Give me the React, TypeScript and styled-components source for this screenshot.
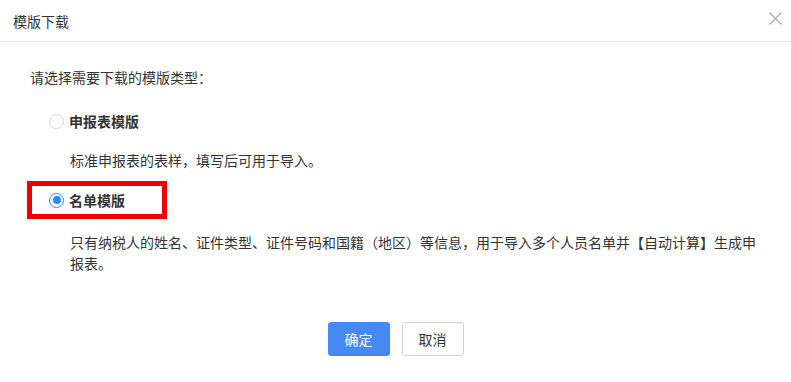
import styled, { createGlobalStyle } from "styled-components";

const GlobalStyle = createGlobalStyle`
  html, body {
    margin: 0;
    padding: 0;
    background: #fff;
  }
  body {
    font-family: "Noto Sans CJK SC", "Liberation Sans", sans-serif;
    color: #333;
    font-size: 14px;
  }
`;

const Dialog = styled.div`
  width: 791px;
  height: 382px;
  background: #fff;
  display: flex;
  flex-direction: column;
`;

const Header = styled.div`
  height: 41px;
  border-bottom: 1px solid #e5e5e5;
  display: flex;
  align-items: center;
  justify-content: space-between;
  padding: 0 9px 0 13px;
  box-sizing: content-box;
`;

const Title = styled.div`
  font-size: 14px;
  line-height: 20px;
  color: #333;
`;

const CloseButton = styled.button`
  border: none;
  background: none;
  padding: 0;
  width: 13px;
  height: 13px;
  display: flex;
  cursor: pointer;
  margin-top: -4px;
`;

const Body = styled.div`
  padding: 25px 30px 0 30px;
  display: flex;
  flex-direction: column;
  align-items: flex-start;
`;

const Intro = styled.div`
  line-height: 21px;
  margin-bottom: 14px;
`;

const OptionRow = styled.label<{ $highlight?: boolean }>`
  display: flex;
  align-items: center;
  gap: 5px;
  box-sizing: border-box;
  width: 140px;
  height: 38px;
  margin-left: -3px;
  padding-left: 17px;
  border: 5px solid ${(p) => (p.$highlight ? "#f00000" : "transparent")};
  cursor: pointer;
`;

const Radio = styled.span<{ $checked?: boolean }>`
  width: 15px;
  height: 15px;
  box-sizing: border-box;
  border-radius: 50%;
  border: 1px solid ${(p) => (p.$checked ? "#2a8af6" : "#d6d6d6")};
  display: flex;
  align-items: center;
  justify-content: center;
  flex-shrink: 0;

  &::after {
    content: "";
    width: 8px;
    height: 8px;
    border-radius: 50%;
    background: #2a8af6;
    display: ${(p) => (p.$checked ? "block" : "none")};
  }
`;

const OptionLabel = styled.span`
  font-weight: bold;
  line-height: 20px;
  color: #333;
`;

const Desc = styled.div<{ $gap: number }>`
  margin: ${(p) => p.$gap}px 0 0 40px;
  width: 692px;
  line-height: 21px;
  color: #333;
`;

const Footer = styled.div`
  margin-top: auto;
  padding-bottom: 26px;
  display: flex;
  justify-content: center;
  gap: 12px;
`;

const Button = styled.button<{ $primary?: boolean }>`
  height: 34px;
  width: 62px;
  border-radius: 3px;
  font-family: inherit;
  font-size: 14px;
  cursor: pointer;
  border: 1px solid ${(p) => (p.$primary ? "#4689f5" : "#d2d2d2")};
  background: ${(p) => (p.$primary ? "#4689f5" : "#fff")};
  color: ${(p) => (p.$primary ? "#fff" : "#333")};
`;

const options = [
  {
    key: "report",
    label: "申报表模版",
    desc: "标准申报表的表样，填写后可用于导入。",
    checked: false,
    gap: 10,
  },
  {
    key: "list",
    label: "名单模版",
    desc: "只有纳税人的姓名、证件类型、证件号码和国籍（地区）等信息，用于导入多个人员名单并【自动计算】生成申报表。",
    checked: true,
    gap: 13,
  },
];

export default function App() {
  return (
    <>
      <GlobalStyle />
      <Dialog>
        <Header>
          <Title>模版下载</Title>
          <CloseButton aria-label="关闭">
            <svg width="13" height="13" viewBox="0 0 13 13">
              <path d="M0.5 0.5 L12.5 12.5 M12.5 0.5 L0.5 12.5" stroke="#a8a8a8" strokeWidth="1.2" fill="none" />
            </svg>
          </CloseButton>
        </Header>
        <Body>
          <Intro>请选择需要下载的模版类型：</Intro>
          {options.map((o, i) => (
            <div key={o.key} style={{ marginTop: i === 0 ? 0 : 10 }}>
              <OptionRow $highlight={o.checked}>
                <Radio $checked={o.checked} />
                <OptionLabel>{o.label}</OptionLabel>
              </OptionRow>
              <Desc $gap={o.gap}>{o.desc}</Desc>
            </div>
          ))}
        </Body>
        <Footer>
          <Button $primary>确定</Button>
          <Button>取消</Button>
        </Footer>
      </Dialog>
    </>
  );
}
